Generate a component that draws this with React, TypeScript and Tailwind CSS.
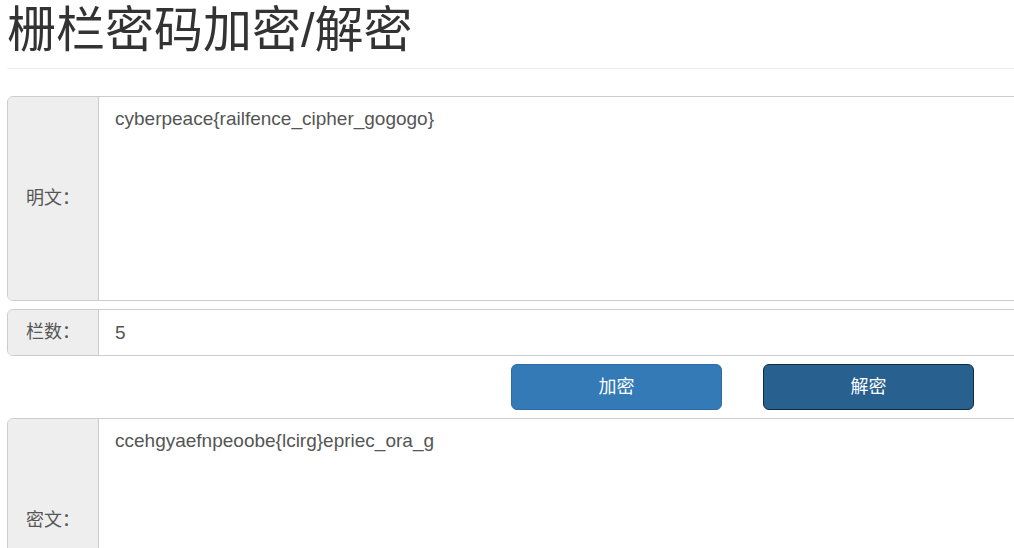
import { useState } from "react";

const FONT = "font-['Liberation_Sans','Noto_Sans_CJK_SC',sans-serif]";

const railfence = (text: string, n: number) => {
  if (n < 2) return text;
  const rows: string[] = Array(n).fill("");
  for (let i = 0; i < text.length; i++) rows[i % n] += text[i];
  return rows.join("");
};

const InputGroup = ({
  label,
  children,
  tall,
}: {
  label: string;
  children: React.ReactNode;
  tall?: boolean;
}) => (
  <div
    className={`flex w-[1100px] rounded-l-[6px] border border-[#ccc] shadow-[inset_0_1px_1px_rgba(0,0,0,0.075)] ${
      tall ? "h-[205px]" : "h-[47px]"
    }`}
  >
    <div className="flex w-[91px] shrink-0 items-center justify-center rounded-l-[5px] border-r border-[#ccc] bg-[#eee] text-[18px] text-[#555]">
      {label}
    </div>
    <div className="flex-1 bg-white">{children}</div>
  </div>
);

export default function App() {
  const [plain, setPlain] = useState("cyberpeace{railfence_cipher_gogogo}");
  const [rails, setRails] = useState("5");
  const [cipher, setCipher] = useState("ccehgyaefnpeoobe{lcirg}epriec_ora_g");

  return (
    <div className={`h-[548px] w-full overflow-hidden bg-white pl-[7px] ${FONT}`}>
      <h1 className="pt-[2px] text-[49px] leading-[56px] text-[#333]">栅栏密码加密/解密</h1>
      <div className="mt-[10px] mb-[27px] h-px bg-[#eee]" />

      <InputGroup label="明文：" tall>
        <textarea
          value={plain}
          onChange={(e) => setPlain(e.target.value)}
          className="h-full w-full resize-none px-4 pt-[10px] text-[19px] leading-6 text-[#555] outline-none"
        />
      </InputGroup>

      <div className="mt-[8px]">
        <InputGroup label="栏数：">
          <input
            value={rails}
            onChange={(e) => setRails(e.target.value)}
            className="h-full w-full px-4 text-[19px] text-[#555] outline-none"
          />
        </InputGroup>
      </div>

      <div className="my-[8px] flex gap-[41px] pl-[504px]">
        <button
          onClick={() => setCipher(railfence(plain, Number(rails)))}
          className="h-[46px] w-[211px] rounded-[6px] border border-[#2e6da4] bg-[#337ab7] text-[18px] text-white"
        >
          加密
        </button>
        <button className="h-[46px] w-[211px] rounded-[6px] border border-[#122b40] bg-[#286090] text-[18px] text-white">
          解密
        </button>
      </div>

      <InputGroup label="密文：" tall>
        <textarea
          value={cipher}
          onChange={(e) => setCipher(e.target.value)}
          className="h-full w-full resize-none px-4 pt-[10px] text-[19px] leading-6 text-[#555] outline-none"
        />
      </InputGroup>
    </div>
  );
}
